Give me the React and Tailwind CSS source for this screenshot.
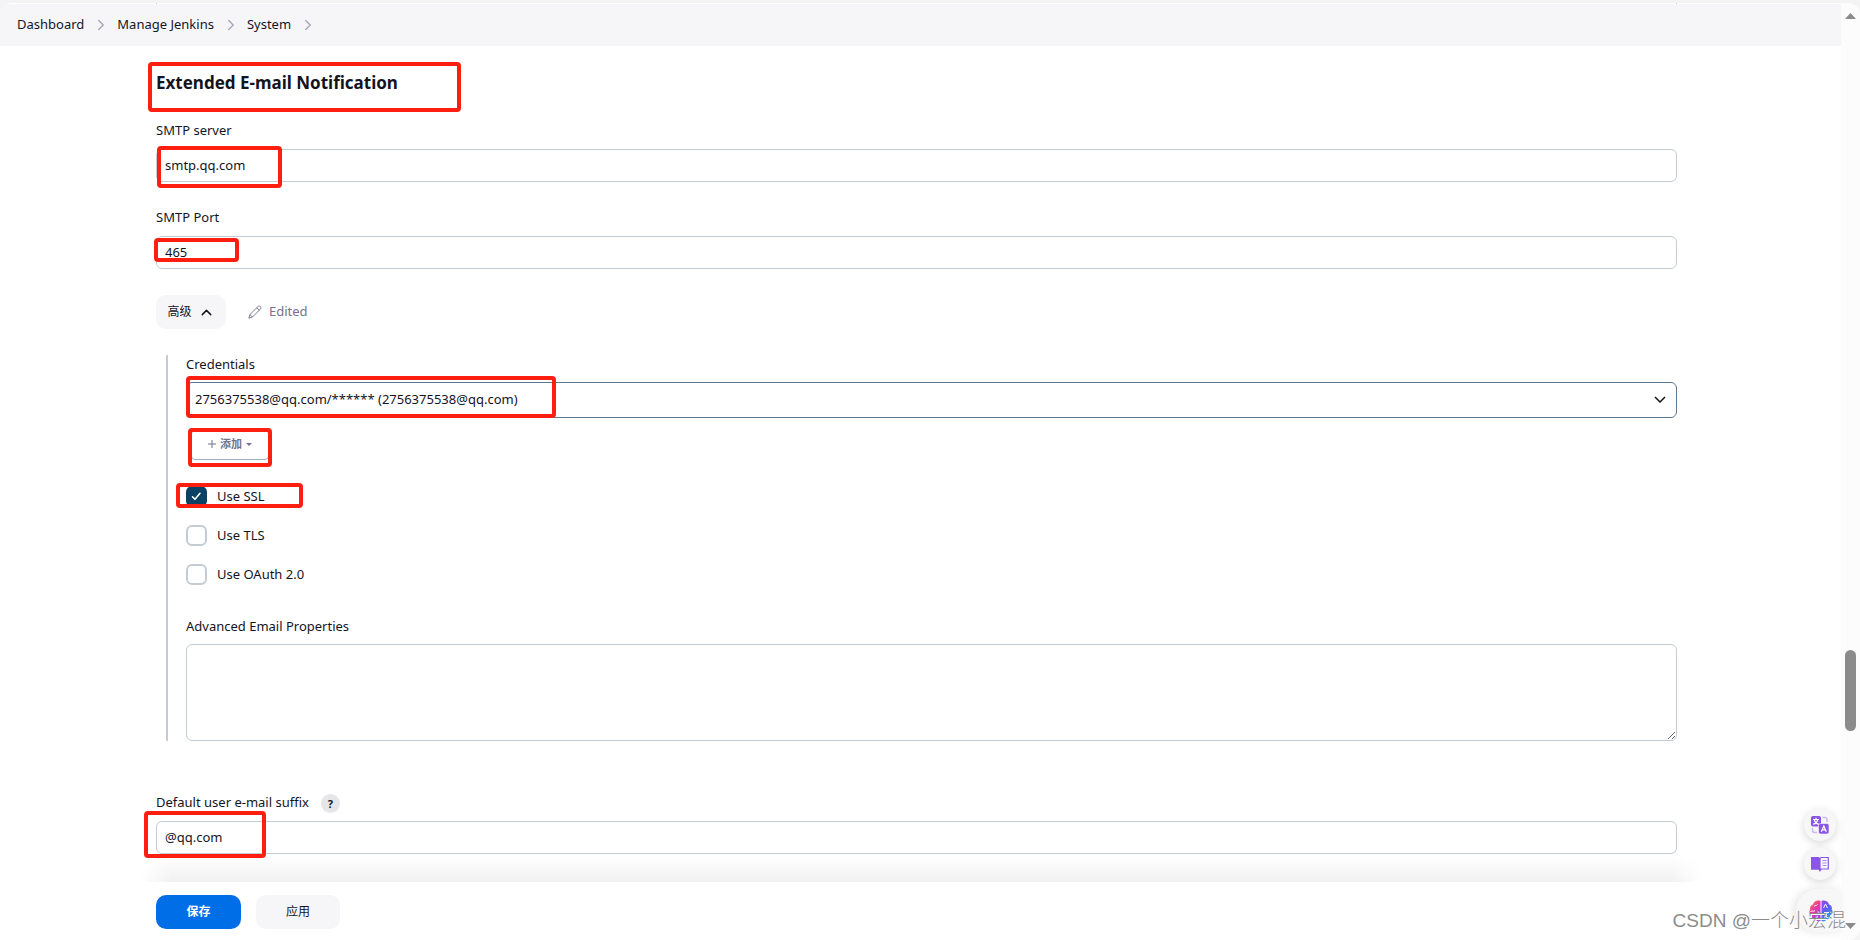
import { ChevronRight, ChevronUp } from 'lucide-react';

const crumbs = ['Dashboard', 'Manage Jenkins', 'System'];

const Highlight = ({ className }) => (
    <span className={`pointer-events-none absolute z-10 rounded-[4px] border-4 border-[#ff1f10] ${className}`} />
);

const TextField = ({ id, label, value, help, children }) => (
    <div>
        <div className="flex h-5 items-center gap-3">
            <label htmlFor={id}>{label}</label>
            {help && (
                <button
                    type="button"
                    aria-label={`Help for ${label}`}
                    className="h-[19px] w-[19px] rounded-full bg-[#e6e6e8] text-[11px] leading-[19px] font-bold"
                >
                    ?
                </button>
            )}
        </div>
        <div className="relative mt-2">
            <input
                id={id}
                type="text"
                defaultValue={value}
                className="block h-[33px] w-full rounded-md border border-[#c3ccd3] bg-white px-2 pb-[2px] outline-none"
            />
            {children}
        </div>
    </div>
);

const CheckField = ({ id, label, checked, children }) => (
    <div className="relative flex h-[21px] items-center gap-[10px]">
        <span className="relative h-[21px] w-[21px]">
            <input
                id={id}
                type="checkbox"
                defaultChecked={checked}
                className="peer block h-[21px] w-[21px] appearance-none rounded-md border-2 border-[#c3ccd3] bg-white checked:border-[#0b4165] checked:bg-[#0b4165]"
            />
            <svg
                viewBox="0 0 21 21"
                fill="none"
                stroke="white"
                strokeWidth="1.6"
                strokeLinecap="round"
                strokeLinejoin="round"
                className="pointer-events-none absolute inset-0 hidden peer-checked:block"
            >
                <path d="M6.5 10.800l2.500 2.500 5-6" />
            </svg>
        </span>
        <label htmlFor={id}>{label}</label>
        {children}
    </div>
);

const PencilIcon = () => (
    <svg viewBox="0 0 512 512" className="h-[14px] w-[14px]" fill="none" stroke="currentColor" strokeWidth="34" strokeLinejoin="round">
        <path d="M364 58L72 348 30 482l134-42L454 148c26-26 26-62 2-88s-66-28-92-2z" />
        <path d="M322 100l90 90M72 348l92 92" />
    </svg>
);

const TranslateIcon = () => (
    <svg viewBox="0 0 18 18" className="h-[18px] w-[18px]" fill="none">
        <rect width="10" height="10.5" rx="2" fill="#8b56e8" />
        <rect x="7.5" y="7.5" width="10.5" height="10.5" rx="2" fill="#8b56e8" stroke="#f7f7f8" strokeWidth="0.6" />
        <path d="M2 3.5h6M5 1.8v1.7M3.3 3.8c.5 2 2 3.800 4.400 4.600M6.700 3.800C6.200 5.800 4.700 7.600 2.300 8.400" stroke="white" strokeWidth="1.2" />
        <path d="M10.300 15.700l2.500-5.700 2.500 5.700M11.200 13.900h3.200" stroke="white" strokeWidth="1.2" />
        <path d="M11.500 1.500H14a2 2 0 012 2V6M1.500 12v2.500a2 2 0 002 2H6" stroke="#cdb6f5" strokeWidth="1.5" />
    </svg>
);

const BookIcon = () => (
    <svg viewBox="0 0 18 16" className="h-4 w-[18px]" fill="none">
        <path d="M0 1h7.500L9 2v12.500l-1-.8H0z" fill="#8b56e8" />
        <path d="M9 2.200l1.300-.7h7v11.500H10L9 14z" stroke="#8b56e8" strokeWidth="1.2" />
        <path d="M11.500 4.500h4M11.500 7h4M11.500 9.500h4" stroke="#a98af0" />
        <path d="M7.500 13h3L9 16z" fill="#8b56e8" />
    </svg>
);

const BrainIcon = () => (
    <svg viewBox="0 0 24 22" className="h-[22px] w-6">
        <defs>
            <linearGradient id="brainLeft" x1="0" y1="0" x2="0.6" y2="1">
                <stop offset="0" stopColor="#ff9a2e" />
                <stop offset="0.45" stopColor="#f0389c" />
                <stop offset="1" stopColor="#a63cf0" />
            </linearGradient>
            <linearGradient id="brainRight" x1="0" y1="0" x2="0.5" y2="1">
                <stop offset="0" stopColor="#a046e6" />
                <stop offset="0.5" stopColor="#5f5cf0" />
                <stop offset="1" stopColor="#2ea3f5" />
            </linearGradient>
        </defs>
        <path d="M11.500 1v20C9.500 22 7 21 6.500 19.500 4 19.500 2.500 17.500 3 15.500.5 14.500-.3 11.500 1.200 9.500.5 7 2 4.800 4 4.500 4.500 1.500 8.500-.3 11.500 1z" fill="url(#brainLeft)" />
        <path d="M12.500 1v20c2 1 4.500 0 5-1.500 2.500 0 4-2 3.500-4 2.500-1 3.300-4 1.800-6 .7-2.500-.8-4.700-2.800-5C19.500 1.500 15.500-.3 12.500 1z" fill="url(#brainRight)" />
        <g fill="none" stroke="#f7f7f7" strokeWidth="1">
            <path d="M5 6.500c1-1.500 2.500-.5 3.500-2M1.500 11.500c2-1 3 .5 4.500-1" />
            <path d="M14.500 8l2-4 2 4M15 12.500h5M15.500 16l4 2M18.500 12.500l-3 5" />
        </g>
    </svg>
);

const Scrollbar = () => (
    <div aria-hidden="true" className="flex w-[19px] shrink-0 flex-col items-center bg-[#fcfcfc] pt-[10px] pb-[11px]">
        <svg viewBox="0 0 11 6" className="h-[6px] w-[11px] shrink-0" fill="#8b8b8b">
            <path d="M5.500 0L11 6H0z" />
        </svg>
        <div className="grow-[630]" />
        <div className="h-[81px] w-[11px] shrink-0 rounded-full bg-[#8b8b8b]" />
        <div className="grow-[192]" />
        <svg viewBox="0 0 11 6" className="h-[6px] w-[11px] shrink-0" fill="#8b8b8b">
            <path d="M0 0h11L5.500 6z" />
        </svg>
    </div>
);

const Breadcrumbs = () => (
    <nav className="flex h-[42px] items-center gap-[7px] bg-[#f6f6f9] px-[17px]">
        {crumbs.map((crumb) => (
            <span key={crumb} className="flex items-center gap-2">
                <a href="#">{crumb}</a>
                <ChevronRight size={18} strokeWidth={2} className="text-[#a9a9bd]" />
            </span>
        ))}
    </nav>
);

const AdvancedSettings = () => (
    <div className="mt-[26px] ml-[10px] border-l-2 border-[#c3ccd3] pl-[18px]">
        <label htmlFor="credentials" className="block h-[27px] leading-[19px]">Credentials</label>
        <div className="relative">
            <select
                id="credentials"
                className="block h-9 w-full appearance-none rounded-md border border-[#5b7990] bg-white px-2 outline-none"
            >
                <option>2756375538@qq.com/****** (2756375538@qq.com)</option>
            </select>
            <svg
                viewBox="0 0 12 7"
                className="pointer-events-none absolute top-[14px] right-[11px] h-[7px] w-3"
                fill="none"
                stroke="#14141f"
                strokeWidth="1.5"
            >
                <path d="M1 1l5 5 5-5" />
            </svg>
            <Highlight className="-top-[6px] left-0 h-[42px] w-[370px]" />
        </div>

        <div className="relative mt-3 ml-[5px] w-fit">
            <button
                type="button"
                className="flex h-[30px] w-[78px] items-center justify-center gap-1 rounded border border-[#9fb0bf] pb-[2px] text-[11px] font-bold text-[#73738c]"
            >
                <svg viewBox="0 0 8 8" className="h-2 w-2" stroke="currentColor">
                    <path d="M4 0v8M0 4h8" />
                </svg>
                添加
                <svg viewBox="0 0 6 3" className="h-[3px] w-[6px]" fill="currentColor">
                    <path d="M0 0h6L3 3z" />
                </svg>
            </button>
            <Highlight className="-top-[2px] -left-[3px] h-[39px] w-[84px]" />
        </div>

        <div className="mt-[26px] flex flex-col gap-[18px]">
            <CheckField id="ssl" label="Use SSL" checked>
                <Highlight className="-top-[3px] -left-[10px] h-[25px] w-[127px]" />
            </CheckField>
            <CheckField id="tls" label="Use TLS" />
            <CheckField id="oauth" label="Use OAuth 2.0" />
        </div>

        <label htmlFor="properties" className="mt-[31px] block h-7 leading-5">Advanced Email Properties</label>
        <textarea
            id="properties"
            className="block h-[97px] w-full resize-y rounded-md border border-[#c3ccd3] bg-white px-2 outline-none"
        />
    </div>
);

const FloatingTools = () => (
    <div className="absolute right-[19px] bottom-[8px] z-30 flex flex-col items-end">
        <button
            type="button"
            aria-label="Translate"
            className="mr-[5px] mb-[7px] flex h-8 w-8 items-center justify-center rounded-full bg-[#f7f7f8] shadow-[0_2px_8px_rgba(0,0,0,0.16)]"
        >
            <TranslateIcon />
        </button>
        <button
            type="button"
            aria-label="Reader"
            className="mr-[5px] mb-[9px] flex h-8 w-8 items-center justify-center rounded-full bg-[#f7f7f8] shadow-[0_2px_8px_rgba(0,0,0,0.16)]"
        >
            <BookIcon />
        </button>
        <button
            type="button"
            aria-label="Assistant"
            className="flex h-[43px] w-[45px] items-center justify-center rounded-l-full bg-[#f7f7f8] pl-1 shadow-[-3px_0_8px_rgba(0,0,0,0.10)]"
        >
            <BrainIcon />
        </button>
    </div>
);

export default function App() {
    return (
        <div className="flex min-h-screen flex-col bg-[#f4f4f4] pt-[3px] font-['Noto_Sans','Noto_Sans_CJK_SC',sans-serif] text-[13px] text-[#14141f]">
            <div className="relative flex flex-1 overflow-hidden rounded-t-xl rounded-br-xl bg-white">
                <div className="flex min-w-0 flex-1 flex-col">
                    <div className="mr-[164px] ml-[156px] h-px border-x border-[#c3ccd3]" />
                    <Breadcrumbs />

                    <main className="flex-1 pt-4 pr-[164px] pl-[156px]">
                        <div className="relative mb-[9px] flex h-[50px] items-start pt-[7px]">
                            <h1 className="text-[17px] leading-7 font-bold">Extended E-mail Notification</h1>
                            <Highlight className="top-0 -left-2 h-[50px] w-[313px]" />
                        </div>

                        <TextField id="server" label="SMTP server" value="smtp.qq.com">
                            <Highlight className="-top-[3px] left-[1px] h-[42px] w-[125px]" />
                        </TextField>
                        <div className="h-[26px]" />
                        <TextField id="port" label="SMTP Port" value="465">
                            <Highlight className="top-[2px] -left-[2px] h-6 w-[85px]" />
                        </TextField>

                        <div className="mt-[26px] flex items-center gap-[22px]">
                            <button
                                type="button"
                                className="flex h-[34px] w-[70px] items-center justify-center gap-[6px] rounded-[10px] bg-[#f6f6f9] text-[12px]"
                            >
                                高级
                                <ChevronUp size={17} strokeWidth={2} />
                            </button>
                            <span className="flex items-center gap-[7px] text-[#73738c]">
                                <PencilIcon />
                                Edited
                            </span>
                        </div>

                        <AdvancedSettings />

                        <div className="h-[52px]" />
                        <TextField id="suffix" label="Default user e-mail suffix" value="@qq.com" help>
                            <Highlight className="-top-[10px] -left-3 h-[47px] w-[122px]" />
                        </TextField>
                    </main>

                    <div className="mr-[140px] ml-[140px] h-[26px] bg-linear-to-b from-white to-[#f1f1f1] mask-x-from-98% mask-x-to-100%" />
                    <footer className="flex gap-[15px] bg-white pt-[13px] pr-[164px] pb-[11px] pl-[156px]">
                        <button type="button" className="h-[34px] w-[85px] rounded-[10px] bg-[#006ee6] text-[12px] font-bold text-white">
                            保存
                        </button>
                        <button type="button" className="h-[34px] w-[84px] rounded-[10px] bg-[#f6f6f9] text-[12px]">
                            应用
                        </button>
                    </footer>
                </div>
                <Scrollbar />
                <FloatingTools />
                <p className="pointer-events-none absolute right-[14px] bottom-[7px] z-40 font-['Liberation_Sans','Noto_Sans_CJK_SC',sans-serif] text-[19px] leading-6 font-light text-[#8c8c8c] [text-shadow:1px_1px_0_#ffffff]">
                    CSDN @一个小宏混
                </p>
            </div>
        </div>
    );
}
